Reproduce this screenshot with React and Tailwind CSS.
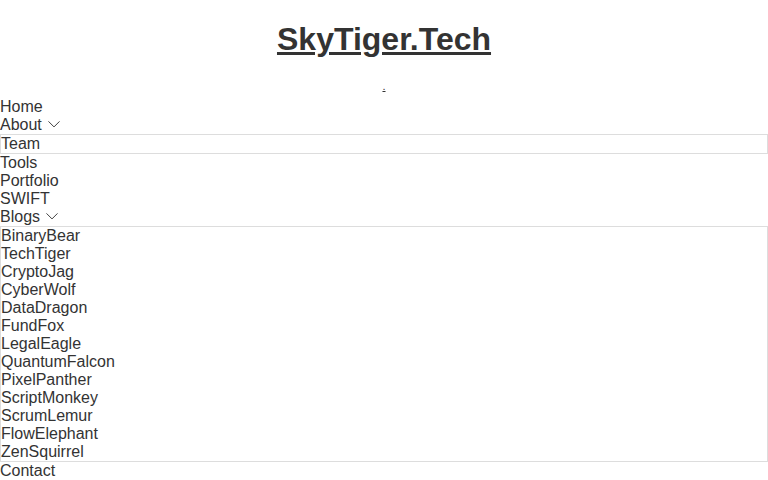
import React from "react";

const Chevron = () => (
  <svg width="14" height="14" viewBox="0 0 24 24" fill="none" stroke="#333" strokeWidth="1.6" strokeLinecap="round" strokeLinejoin="round" className="inline-block align-[-1px] ml-[5px]">
    <path d="M3 8l9 9 9-9" />
  </svg>
);

const blogs = ["BinaryBear","TechTiger","CryptoJag","CyberWolf","DataDragon","FundFox","LegalEagle","QuantumFalcon","PixelPanther","ScriptMonkey","ScrumLemur","FlowElephant","ZenSquirrel"];

export default function App() {
  return (
    <div className="min-h-[480px] bg-white text-[#333] text-[16px]" style={{ fontFamily: '"Liberation Sans", Arial, sans-serif', lineHeight: "normal" }}>
      <h1 className="text-center text-[32px] font-bold my-[21.44px]">
        <a href="#" className="underline text-[#333]">SkyTiger.Tech</a>
      </h1>
      <div className="text-center">
        <a href="#" className="underline text-[11px] text-[#333] align-[4px]">.</a>
      </div>
      <nav>
        <ul>
          <li>Home</li>
          <li>About<Chevron /></li>
          <li className="border border-[#ddd]">Team</li>
          <li>Tools</li>
          <li>Portfolio</li>
          <li>SWIFT</li>
          <li>Blogs<Chevron /></li>
          <li className="border border-[#ddd]">
            <ul>
              {blogs.map((b) => (<li key={b}>{b}</li>))}
            </ul>
          </li>
          <li>Contact</li>
        </ul>
      </nav>
    </div>
  );
}
